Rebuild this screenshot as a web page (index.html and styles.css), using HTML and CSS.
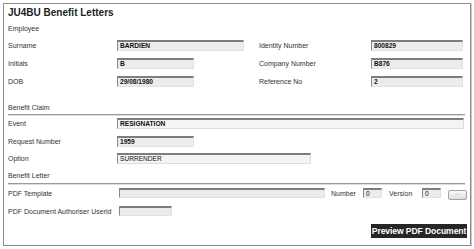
FILE: index.html
```html
<!DOCTYPE html>
<html>
<head>
<meta charset="utf-8">
<link rel="stylesheet" href="styles.css">
</head>
<body>
<div class="frame">
  <div class="title">JU4BU Benefit Letters</div>
  <div class="section-head first">Employee</div>
  <div class="emp-grid">
    <div class="lbl">Surname</div>
    <div class="cell"><div class="inp bold w127">BARDIEN</div></div>
    <div class="lbl">Identity Number</div>
    <div class="cell"><div class="inp bold w92">800829</div></div>

    <div class="lbl">Initials</div>
    <div class="cell"><div class="inp bold w77">B</div></div>
    <div class="lbl">Company Number</div>
    <div class="cell"><div class="inp bold w92">B876</div></div>

    <div class="lbl">DOB</div>
    <div class="cell"><div class="inp bold w77">29/08/1980</div></div>
    <div class="lbl">Reference No</div>
    <div class="cell"><div class="inp bold w92">2</div></div>
  </div>

  <div class="section-head claim">Benefit Claim</div>
  <div class="claim-grid">
    <div class="lbl">Event</div>
    <div class="cell"><div class="inp bold light w347">RESIGNATION</div></div>
    <div class="lbl">Request Number</div>
    <div class="cell"><div class="inp bold w77">1959</div></div>
    <div class="lbl">Option</div>
    <div class="cell"><div class="inp light w194">SURRENDER</div></div>
  </div>

  <div class="section-head letter">Benefit Letter</div>
  <div class="letter-row">
    <div class="lbl lw">PDF Template</div>
    <div class="inp w206 short"></div>
    <div class="lbl num">Number</div>
    <div class="inp w19 short">0</div>
    <div class="lbl ver">Version</div>
    <div class="inp w19 short">0</div>
    <div class="dots">...</div>
  </div>
  <div class="letter-row">
    <div class="lbl lw">PDF Document Authoriser Userid</div>
    <div class="inp w53 short"></div>
  </div>
  <div class="actions">
    <div class="preview">Preview PDF Document</div>
  </div>
</div>
</body>
</html>
```
FILE: styles.css
```css
html, body {
  margin: 0;
  padding: 0;
  background: #ffffff;
}
body {
  font-family: "Liberation Sans", Arial, sans-serif;
  color: #333333;
}
.frame {
  margin: 3px 0 0 3px;
  width: 462px;
  height: 241px;
  border: 1px solid #8c8c8c;
  box-shadow: 1px 1px 0 #c8c8c8;
  padding: 0 0 0 4px;
  display: flex;
  flex-direction: column;
}
.title {
  height: 17px;
  line-height: 18px;
  font-size: 10px;
  font-weight: bold;
  color: #222222;
}
.section-head {
  font-size: 7px;
  color: #333333;
  line-height: 14px;
}
.section-head.first {
  height: 15px;
  line-height: 15px;
}
.section-head.claim {
  height: 25px;
  padding-top: 11px;
  box-sizing: border-box;
  margin-right: 5px;
  border-bottom: 1px solid #9a9a9a;
  box-shadow: 0 1px 0 #dddddd;
}
.section-head.letter {
  padding-top: 1px;
  margin-right: 5px;
  border-bottom: 1px solid #9a9a9a;
  box-shadow: 0 1px 0 #dddddd;
  box-sizing: content-box;
  height: 14.5px;
}
.lbl {
  font-size: 7px;
  color: #333333;
  white-space: nowrap;
}
.emp-grid {
  display: grid;
  grid-template-columns: 109px 142px 112px 99px;
  grid-auto-rows: 18px;
  align-items: center;
}
.claim-grid {
  display: grid;
  grid-template-columns: 109px 353px;
  grid-auto-rows: 17.5px;
  align-items: center;
}
.cell {
  display: flex;
  align-items: center;
}
.inp {
  box-sizing: border-box;
  height: 11px;
  background: #ececec;
  border-top: 2px solid #7d7d7d;
  border-left: 1px solid #8a8a8a;
  border-right: 1px solid #e2e2e2;
  border-bottom: 1px solid #e2e2e2;
  font-size: 6.6px;
  line-height: 8px;
  padding-left: 2px;
  color: #111111;
  white-space: nowrap;
  overflow: hidden;
}
.inp.light {
  background: #f4f4f4;
  border-right-color: #dcdcdc;
  border-bottom-color: #dcdcdc;
  border-radius: 0 0 2px 0;
}
.inp.short {
  height: 10px;
  line-height: 7px;
}
.bold {
  font-weight: bold;
}
.w127 { width: 127px; }
.w92 { width: 92px; }
.w77 { width: 77px; }
.w347 { width: 347px; }
.w194 { width: 194px; }
.w206 { width: 206px; }
.w53 { width: 53px; }
.w19 { width: 19px; }
.letter-row {
  height: 18px;
  display: flex;
  align-items: center;
}
.lw {
  width: 111px;
}
.num {
  margin-left: 6px;
  width: 32px;
}
.ver {
  margin-left: 7px;
  width: 33px;
}
.dots {
  box-sizing: border-box;
  margin-left: 7px;
  margin-top: 3px;
  width: 19px;
  height: 10px;
  border: 1px solid #a3a3a3;
  border-radius: 2px;
  background: linear-gradient(#fafafa, #dedede);
  font-size: 6px;
  line-height: 5px;
  text-align: center;
  color: #777777;
}
.actions {
  display: flex;
  justify-content: flex-end;
  padding-right: 3px;
  margin-top: 4px;
}
.preview {
  height: 14px;
  width: 96px;
  background: #262626;
  color: #ffffff;
  font-weight: bold;
  font-size: 8.6px;
  line-height: 15px;
  text-align: center;
  white-space: nowrap;
  letter-spacing: -0.1px;
}
```
